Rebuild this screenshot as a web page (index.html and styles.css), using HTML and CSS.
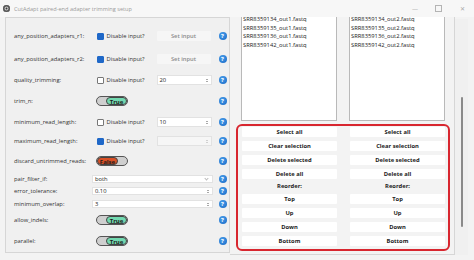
FILE: index.html
```html
<!DOCTYPE html>
<html>
<head>
<meta charset="utf-8">
<link rel="stylesheet" href="styles.css">
</head>
<body>
<div class="window">
  <div class="titlebar">
    <span class="appicon"></span>
    <span class="title">CutAdapt paired-end adapter trimming setup</span>
    <span class="controls"><span class="ctl min">&#x2014;</span><span class="ctl max"></span><span class="ctl close">&#x2715;</span></span>
  </div>
  <div class="main">
    <div class="panel">
      <div class="lbl">any_position_adapters_r1:</div>
      <div class="ctrl"><span class="cb checked"></span><span class="cbtext">Disable input?</span><span class="setbtn">Set input</span></div>
      <div class="help">?</div>

      <div class="lbl">any_position_adapters_r2:</div>
      <div class="ctrl"><span class="cb checked"></span><span class="cbtext">Disable input?</span><span class="setbtn">Set input</span></div>
      <div class="help">?</div>

      <div class="lbl">quality_trimming:</div>
      <div class="ctrl"><span class="cb"></span><span class="cbtext">Disable input?</span><span class="spin short"><span class="val">20</span><span class="arrows"><i class="up"></i><i class="dn"></i></span></span></div>
      <div class="help">?</div>

      <div class="lbl">trim_n:</div>
      <div class="ctrl"><span class="toggle on"><span class="pill">True</span></span></div>
      <div class="help">?</div>

      <div class="lbl">minimum_read_length:</div>
      <div class="ctrl"><span class="cb"></span><span class="cbtext">Disable input?</span><span class="spin short"><span class="val">10</span><span class="arrows"><i class="up"></i><i class="dn"></i></span></span></div>
      <div class="help">?</div>

      <div class="lbl">maximum_read_length:</div>
      <div class="ctrl"><span class="cb checked"></span><span class="cbtext">Disable input?</span><span class="spin short disabled"><span class="val"></span><span class="arrows"><i class="up"></i><i class="dn"></i></span></span></div>
      <div class="help">?</div>

      <div class="lbl">discard_untrimmed_reads:</div>
      <div class="ctrl"><span class="toggle off"><span class="pill">False</span></span></div>
      <div class="help">?</div>

      <div class="lbl">pair_filter_if:</div>
      <div class="ctrl"><span class="combo"><span class="val">both</span><span class="chev"></span></span></div>
      <div class="help">?</div>

      <div class="lbl">error_tolerance:</div>
      <div class="ctrl"><span class="spin wide"><span class="val">0.10</span><span class="arrows"><i class="up"></i><i class="dn"></i></span></span></div>
      <div class="help">?</div>

      <div class="lbl">minimum_overlap:</div>
      <div class="ctrl"><span class="spin wide"><span class="val">3</span><span class="arrows"><i class="up"></i><i class="dn"></i></span></span></div>
      <div class="help">?</div>

      <div class="lbl">allow_indels:</div>
      <div class="ctrl"><span class="toggle on"><span class="pill">True</span></span></div>
      <div class="help">?</div>

      <div class="lbl">parallel:</div>
      <div class="ctrl"><span class="toggle on"><span class="pill">True</span></span></div>
      <div class="help">?</div>
    </div>

    <div class="viewport">
      <div class="scrolled">
        <div class="lists">
          <div class="list">
            <div class="item">SRR8359134_out1.fastq</div>
            <div class="item">SRR8359135_out1.fastq</div>
            <div class="item">SRR8359136_out1.fastq</div>
            <div class="item">SRR8359142_out1.fastq</div>
          </div>
          <div class="list">
            <div class="item">SRR8359134_out2.fastq</div>
            <div class="item">SRR8359135_out2.fastq</div>
            <div class="item">SRR8359136_out2.fastq</div>
            <div class="item">SRR8359142_out2.fastq</div>
          </div>
        </div>
        <div class="actions">
          <div class="col">
            <div class="btn">Select all</div>
            <div class="btn">Clear selection</div>
            <div class="btn">Delete selected</div>
            <div class="btn">Delete all</div>
            <div class="reorder">Reorder:</div>
            <div class="btn">Top</div>
            <div class="btn">Up</div>
            <div class="btn">Down</div>
            <div class="btn">Bottom</div>
          </div>
          <div class="col">
            <div class="btn">Select all</div>
            <div class="btn">Clear selection</div>
            <div class="btn">Delete selected</div>
            <div class="btn">Delete all</div>
            <div class="reorder">Reorder:</div>
            <div class="btn">Top</div>
            <div class="btn">Up</div>
            <div class="btn">Down</div>
            <div class="btn">Bottom</div>
          </div>
        </div>
      </div>
    </div>
    <div class="scrollbar"><div class="thumb"></div></div>
  </div>
</div>
</body>
</html>
```

FILE: styles.css
```css
html, body {
  margin: 0;
  padding: 0;
}
body {
  width: 474px;
  height: 260px;
  overflow: hidden;
  background: #f3f3f3;
  font-family: "Open Sans", "Noto Sans", sans-serif;
  color: #333;
}
.window {
  width: 474px;
  height: 260px;
}
.titlebar {
  height: 17px;
  display: flex;
  align-items: center;
  background: #f7f7f7;
}
.appicon {
  width: 7px;
  height: 7px;
  margin-left: 3px;
  border-radius: 50%;
  background: #3a3a3a;
  box-shadow: inset 0 0 0 1.5px #555, inset 0 0 0 2.5px #d0d0d0;
}
.title {
  margin-left: 4px;
  font-size: 5.6px;
  color: #9a9a9a;
}
.controls {
  margin-left: auto;
  display: flex;
  align-items: center;
}
.ctl {
  color: #a8a8a8;
  font-size: 6px;
  width: 22px;
  text-align: center;
}
.ctl.max {
  width: 5px;
  height: 5px;
  border: 0.7px solid #b4b4b4;
  margin: 0 9px;
}
.ctl.close {
  margin-right: 1px;
}
.main {
  display: flex;
  height: 238px;
}
.panel {
  margin-left: 5px;
  width: 225px;
  height: 236px;
  border: 1px solid #d6d6d6;
  background: #f0f0f0;
  padding: 7px 0 0 8px;
  box-sizing: border-box;
  display: grid;
  grid-template-columns: 78px 122px 17px;
  grid-template-rows: 22px 24px 18px 24px 18px 20px 20px 16px 8px 18px 14px 28px;
  align-items: center;
}
.lbl {
  font-size: 5.8px;
  color: #333;
  white-space: nowrap;
}
.ctrl {
  display: flex;
  align-items: center;
}
.help {
  justify-self: center;
  width: 8px;
  height: 8px;
  border-radius: 50%;
  background: radial-gradient(circle at 40% 35%, #4aa0ec, #1666c4);
  color: #fff;
  font-size: 6px;
  font-weight: 700;
  line-height: 8px;
  text-align: center;
}
.cb {
  width: 5px;
  height: 5px;
  margin-left: 5px;
  border: 0.8px solid #777;
  background: #fff;
  border-radius: 1px;
}
.cb.checked {
  background: #1f68c8;
  border-color: #1f68c8;
}
.cbtext {
  margin-left: 2.5px;
  font-size: 5.8px;
  color: #333;
  width: 50px;
  white-space: nowrap;
}
.setbtn {
  width: 54px;
  height: 10px;
  background: #f6f6f6;
  border-radius: 1px;
  font-size: 5.8px;
  font-weight: 600;
  color: #8a8a8a;
  text-align: center;
  line-height: 10px;
}
.spin, .combo {
  display: flex;
  align-items: center;
  background: #fff;
  border: 0.8px solid #e2e2e2;
  box-sizing: border-box;
  font-size: 5.8px;
  color: #222;
}
.spin.short {
  width: 55px;
  height: 10px;
}
.spin.wide, .combo {
  width: 121px;
  height: 8.5px;
}
.spin.disabled {
  background: #f6f6f6;
}
.val {
  padding-left: 2px;
  flex: 1;
}
.arrows {
  display: flex;
  flex-direction: column;
  gap: 1px;
  margin-right: 3px;
}
.arrows i {
  display: block;
  width: 0;
  height: 0;
  border-left: 1.3px solid transparent;
  border-right: 1.3px solid transparent;
}
.arrows .up {
  border-bottom: 1.6px solid #555;
}
.arrows .dn {
  border-top: 1.6px solid #555;
}
.spin.disabled .arrows .up {
  border-bottom-color: #aaa;
}
.spin.disabled .arrows .dn {
  border-top-color: #aaa;
}
.chev {
  width: 2px;
  height: 2px;
  border-right: 0.7px solid #bbb;
  border-bottom: 0.7px solid #bbb;
  transform: rotate(45deg);
  margin: 0 4px 1px 0;
}
.toggle {
  margin-left: 4px;
  width: 32px;
  height: 10px;
  box-sizing: border-box;
  border: 0.8px solid #555;
  border-radius: 5px;
  background: #cfcfcf;
  display: flex;
}
.toggle .pill {
  width: 21px;
  height: 100%;
  box-sizing: border-box;
  border-radius: 5px;
  border: 0.8px solid #444;
  font-size: 6px;
  font-weight: 700;
  color: #1d1d1d;
  text-align: center;
  line-height: 8px;
}
.toggle.on .pill {
  margin-left: auto;
  background: #72d9b0;
}
.toggle.off .pill {
  background: #d95026;
}
.viewport {
  width: 225px;
  height: 238px;
  overflow: hidden;
  border-right: 1px solid #d6d6d6;
  border-bottom: 1px solid #d6d6d6;
  box-sizing: border-box;
  padding-left: 6px;
}
.scrolled {
  margin-top: -6px;
}
.lists {
  display: flex;
  gap: 12px;
  padding-left: 5px;
}
.list {
  width: 96px;
  height: 110px;
  box-sizing: border-box;
  border: 1px solid #b9b9b9;
  background: #fff;
  padding: 3px 0 0 1px;
}
.item {
  font-size: 5.8px;
  line-height: 8.5px;
  color: #222;
  white-space: nowrap;
}
.actions {
  margin-top: 3px;
  width: 214px;
  height: 127px;
  box-sizing: border-box;
  border: 2px solid #d8262f;
  border-radius: 6px;
  padding: 1px 3px 0 4px;
  display: flex;
  gap: 13px;
}
.col {
  width: 95px;
  display: flex;
  flex-direction: column;
  gap: 4px;
}
.btn {
  height: 10px;
  background: #fff;
  border-radius: 1px;
  font-size: 5.8px;
  font-weight: 700;
  color: #222;
  text-align: center;
  line-height: 10px;
}
.reorder {
  height: 7px;
  font-size: 5.8px;
  font-weight: 700;
  color: #222;
  text-align: center;
  line-height: 7px;
}
.scrollbar {
  width: 13px;
  height: 236px;
  margin-top: 2px;
  background: #f0f0f0;
  display: flex;
  justify-content: center;
}
.thumb {
  width: 2px;
  height: 130px;
  margin-top: 78px;
  background: #8a8a8a;
  border-radius: 1px;
}
```
